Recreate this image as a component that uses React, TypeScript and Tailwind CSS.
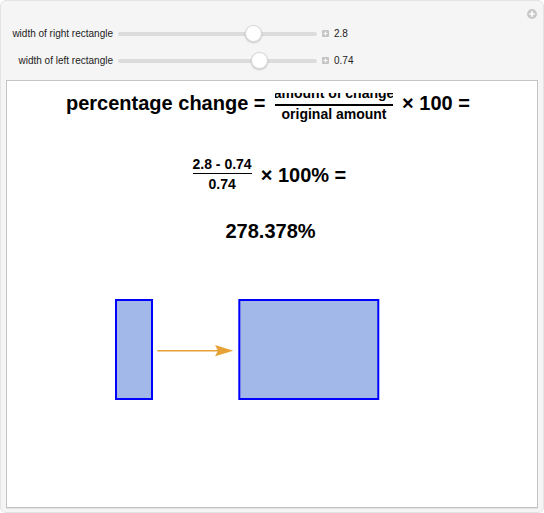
import React from "react";

function PlusBox() {
  return (
    <svg width="7" height="7" viewBox="0 0 7 7" className="shrink-0">
      <rect x="0" y="0" width="7" height="7" rx="1" fill="#c4c4c4" />
      <path d="M3.5 1.5V5.5M1.5 3.5H5.5" stroke="#ffffff" strokeWidth="1.2" />
    </svg>
  );
}

function SliderRow({ label, value, thumb }: { label: string; value: string; thumb: "a" | "b" }) {
  return (
    <div className="flex items-center h-[27px]">
      <div className="w-[112px] text-right text-[10px] leading-[12px] text-[#222] whitespace-nowrap">{label}</div>
      <div className="relative ml-[5px] w-[199px] h-[4px] rounded-full bg-[#dcdcdc]">
        <div
          className={
            "absolute top-[-6.5px] w-[17px] h-[17px] rounded-full bg-white border border-[#d6d6d6] shadow-[0_1px_2px_rgba(0,0,0,0.2)] " +
            (thumb === "a" ? "left-[127px]" : "left-[133px]")
          }
        />
      </div>
      <div className="ml-[5px] flex items-center">
        <PlusBox />
      </div>
      <div className="ml-[5px] text-[10px] leading-[12px] text-[#222]">{value}</div>
    </div>
  );
}

export default function App() {
  return (
    <div className="w-[544px] h-[513px] bg-[#f5f5f5] border border-[#e4e4e4] rounded-[6px] flex flex-col font-['Liberation_Sans',Arial,sans-serif] text-black overflow-hidden">
      <div className="h-[19px] flex justify-end items-start pr-[6px]">
        <svg width="10" height="10" viewBox="0 0 10 10" className="mt-[8px]">
          <circle cx="5" cy="5" r="5" fill="#c9c9c9" />
          <path d="M5 2.3V7.7M2.3 5H7.7" stroke="#ffffff" strokeWidth="1.6" />
        </svg>
      </div>
      <SliderRow label="width of right rectangle" value="2.8" thumb="a" />
      <SliderRow label="width of left rectangle" value="0.74" thumb="b" />
      <div className="mt-[6px] mx-[5px] mb-[4px] flex-1 bg-white border border-[#c4c4c4] shadow-[0_1px_0_#e2e2e2] flex flex-col items-start font-bold">
        {/* line 1 */}
        <div className="mt-[10px] ml-[59px] flex items-start">
          <div className="mt-[1.5px] text-[20px] leading-[20px] whitespace-nowrap">percentage change =</div>
          <div className="ml-[9.5px] mt-[2px] w-[118px] flex flex-col items-center">
            <div className="h-[10px] w-[118px] overflow-hidden flex items-end justify-center">
              <div className="text-[14px] leading-[14px] pb-[3px] whitespace-nowrap shrink-0">amount of change</div>
            </div>
            <div className="mt-[1px] h-[1.5px] w-full bg-black" />
            <div className="mt-[1.5px] text-[14px] leading-[14px] whitespace-nowrap">original amount</div>
          </div>
          <div className="ml-[9px] mt-[1.5px] text-[20px] leading-[20px] whitespace-nowrap">× 100 =</div>
        </div>
        {/* line 2 */}
        <div className="mt-[36px] ml-[185.5px] flex items-start">
          <div className="flex flex-col items-center">
            <div className="text-[14px] leading-[14px] whitespace-nowrap">2.8 - 0.74</div>
            <div className="mt-[1.5px] h-[1.5px] w-full bg-black" />
            <div className="mt-[2.5px] text-[14px] leading-[14px] whitespace-nowrap">0.74</div>
          </div>
          <div className="ml-[9px] mt-[8px] text-[20px] leading-[20px] whitespace-nowrap">× 100% =</div>
        </div>
        {/* line 3 */}
        <div className="mt-[30px] ml-[218.5px] text-[20px] leading-[20px] whitespace-nowrap">278.378%</div>
        {/* drawing */}
        <svg width="530" height="120" viewBox="0 0 530 120" className="mt-[49.5px] block">
          <rect x="109" y="10" width="36" height="99" fill="#a1b8e8" stroke="#0000ff" strokeWidth="2" />
          <rect x="232.3" y="10" width="139" height="99" fill="#a1b8e8" stroke="#0000ff" strokeWidth="2" />
          <line x1="150.3" y1="60.7" x2="211" y2="60.7" stroke="#e6a237" strokeWidth="1.5" />
          <polygon points="208,55 226.3,60.7 208,66.3 211,60.7" fill="#e6a237" />
        </svg>
      </div>
    </div>
  );
}
